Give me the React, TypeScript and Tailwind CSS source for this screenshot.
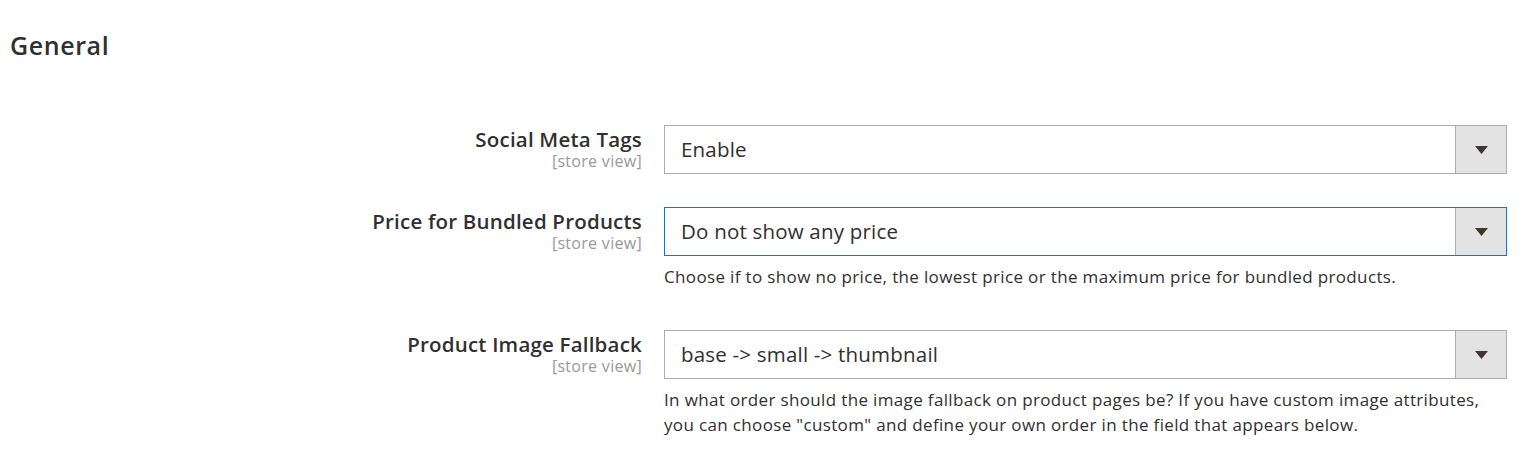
import React from "react";

interface FieldRowProps {
    label: string;
    value: string;
    note?: React.ReactNode;
    focused?: boolean;
    className?: string;
}

function SelectBox({ value, focused }: { value: string; focused?: boolean }) {
    return (
        <div
            className={
                "flex h-[49px] w-full items-stretch bg-white border " +
                (focused ? "border-[#007bdb]" : "border-[#adadad]")
            }
        >
            <div className="flex flex-1 items-center pl-[16px] text-[20.5px] tracking-[0.2px] text-[#303030]">{value}</div>
            <div className="flex w-[51px] items-center justify-center bg-[#e3e3e3] border-l border-[#adadad]">
                <svg width="13" height="8" viewBox="0 0 13 8">
                    <polygon points="0,0 13,0 6.5,8" fill="#41362f" />
                </svg>
            </div>
        </div>
    );
}

function FieldRow({ label, value, note, focused, className }: FieldRowProps) {
    return (
        <div className={"flex " + (className ?? "")}>
            <div className="flex w-[642px] shrink-0 flex-col items-end">
                <span className="text-[20.5px] leading-[28px] font-semibold tracking-[0.2px] text-[#303030]">{label}</span>
                <span className="text-[16px] leading-[17px] tracking-[0.3px] text-[#999999]">[store view]</span>
            </div>
            <div className="ml-[22px] mr-[29px] flex flex-1 flex-col">
                <SelectBox value={value} focused={focused} />
                {note && (
                    <div className="mt-[8px] text-[17px] leading-[25px] tracking-[0.35px] text-[#303030]">{note}</div>
                )}
            </div>
        </div>
    );
}

export default function App() {
    return (
        <div className="min-h-[468px] bg-white" style={{ fontFamily: '"Open Sans", "Liberation Sans", sans-serif' }}>
            <h1 className="pl-[10px] pt-[30px] text-[25px] leading-[31px] font-semibold tracking-[0.6px] text-[#303030]">
                General
            </h1>

            <FieldRow className="mt-[64px]" label="Social Meta Tags" value="Enable" />
            <FieldRow
                className="mt-[33px]"
                label="Price for Bundled Products"
                value="Do not show any price"
                focused
                note="Choose if to show no price, the lowest price or the maximum price for bundled products."
            />
            <FieldRow
                className="mt-[41px]"
                label="Product Image Fallback"
                value="base -> small -> thumbnail"
                note={
                    <>
                        In what order should the image fallback on product pages be? If you have custom image attributes,
                        <br />
                        you can choose "custom" and define your own order in the field that appears below.
                    </>
                }
            />
        </div>
    );
}
